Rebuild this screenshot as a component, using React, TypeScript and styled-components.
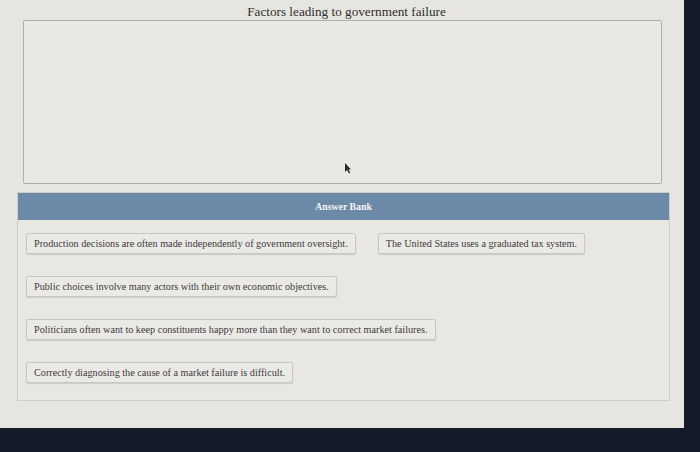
import * as React from 'react';
import styled, { createGlobalStyle } from 'styled-components';

const GlobalStyle = createGlobalStyle`
    html, body {
        margin: 0;
        padding: 0;
        background: #151a28;
    }
`;

const Screen = styled.div`
    width: 684px;
    height: 428px;
    background: #e7e5e0;
    box-sizing: border-box;
    padding: 4px 14px 0 17px;
    display: flex;
    flex-direction: column;
    font-family: 'Liberation Serif', 'Times New Roman', serif;
    color: #3a3a3a;
`;
const Title = styled.div`
    text-align: center;
    font-size: 13.2px;
    line-height: 15px;
    color: #2f2f2f;
    padding-left: 6px;
`;
const DropZone = styled.div`
    margin: 1px 8px 0 6px;
    height: 162px;
    border: 1px solid #b0aeaa;
    border-radius: 2px;
    background: #eae8e4;
    display: flex;
    align-items: flex-end;
    justify-content: center;
`;
const Cursor = styled.svg`
    margin: 0 0 9px 10px;
`;
const Bank = styled.div`
    margin-top: 8px;
    border: 1px solid #cfcdc9;
    background: #e9e7e2;
`;
const BankHeader = styled.div`
    height: 27px;
    background: #6c8aa8;
    color: #f4f4f4;
    font-weight: bold;
    font-size: 9.8px;
    display: flex;
    align-items: center;
    justify-content: center;
`;
const BankBody = styled.div`
    display: flex;
    flex-wrap: wrap;
    align-items: flex-start;
    gap: 22px 22px;
    padding: 13px 8px 17px 8px;
    width: 600px;
`;
const Item = styled.div`
    height: 21px;
    box-sizing: border-box;
    padding: 0 7px;
    display: flex;
    align-items: center;
    font-size: 10.2px;
    color: #3b3b3b;
    background: #ebe9e5;
    border: 1px solid #c9c7c2;
    border-radius: 2px;
    box-shadow: 0 1px 1px rgba(0, 0, 0, 0.12);
    white-space: nowrap;
`;

const answers = [
    'Production decisions are often made independently of government oversight.',
    'The United States uses a graduated tax system.',
    'Public choices involve many actors with their own economic objectives.',
    'Politicians often want to keep constituents happy more than they want to correct market failures.',
    'Correctly diagnosing the cause of a market failure is difficult.',
];

export default function App() {
    return (
        <>
            <GlobalStyle />
            <Screen>
                <Title>Factors leading to government failure</Title>
                <DropZone>
                    <Cursor width="8" height="11" viewBox="0 0 8 11">
                        <path d="M1 0 L1 9 L3 7 L5 10.5 L6.3 9.8 L4.4 6.6 L7 6.4 Z" fill="#2a2a2a" />
                    </Cursor>
                </DropZone>
                <Bank>
                    <BankHeader>Answer Bank</BankHeader>
                    <BankBody>
                        {answers.map((a) => (
                            <Item key={a}>{a}</Item>
                        ))}
                    </BankBody>
                </Bank>
            </Screen>
        </>
    );
}
